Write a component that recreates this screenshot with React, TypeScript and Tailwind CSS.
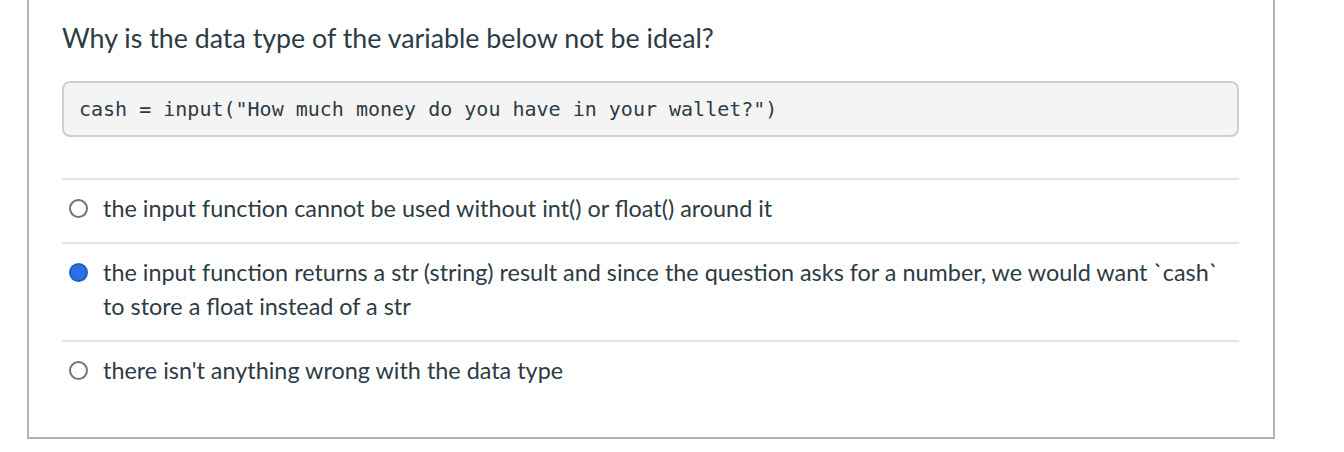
const options = [
  { id: "a", text: "the input function cannot be used without int() or float() around it", checked: false },
  {
    id: "b",
    text: "the input function returns a str (string) result and since the question asks for a number, we would want `cash` to store a float instead of a str",
    checked: true,
  },
  { id: "c", text: "there isn't anything wrong with the data type", checked: false },
];

function Radio({ checked }: { checked: boolean }) {
  if (checked) {
    return <span className="mt-[8px] block h-[19px] w-[19px] shrink-0 rounded-full border-2 border-[#1f5fc9] bg-[#2b6fe0]" />;
  }
  return <span className="mt-[8px] block h-[19px] w-[19px] shrink-0 rounded-full border-2 border-[#757575] bg-white" />;
}

export default function App() {
  return (
    <div className="min-h-screen bg-white pl-[27px] pr-[69px] font-['Lato','Noto_Sans',sans-serif] text-[#2d3b45]">
      <div className="h-[439px] border-x-2 border-b-2 border-[#b2b2b2] pl-[33px] pr-[34px]">
        {/* Question */}
        <h2 className="pt-[22px] text-[26.8px] leading-[1.2] font-normal">
          Why is the data type of the variable below not be ideal?
        </h2>

        <div className="mt-[27px] flex h-[56px] items-center rounded-lg border-2 border-[#cbd0d4] bg-[#f4f4f4] pl-[15px]">
          <code className="font-['DejaVu_Sans_Mono',monospace] text-[20px] text-[#2d3b45]">
            cash = input("How much money do you have in your wallet?")
          </code>
        </div>

        {/* Answers */}
        <div className="mt-[41px]">
          {options.map((o) => (
            <label key={o.id} className="flex gap-[15px] border-t-2 border-[#e2e4e6] pt-[11px] pb-[17px] pl-[7px]">
              <Radio checked={o.checked} />
              <span className="text-[23.4px] leading-[34px]">{o.text}</span>
            </label>
          ))}
        </div>
      </div>
    </div>
  );
}
